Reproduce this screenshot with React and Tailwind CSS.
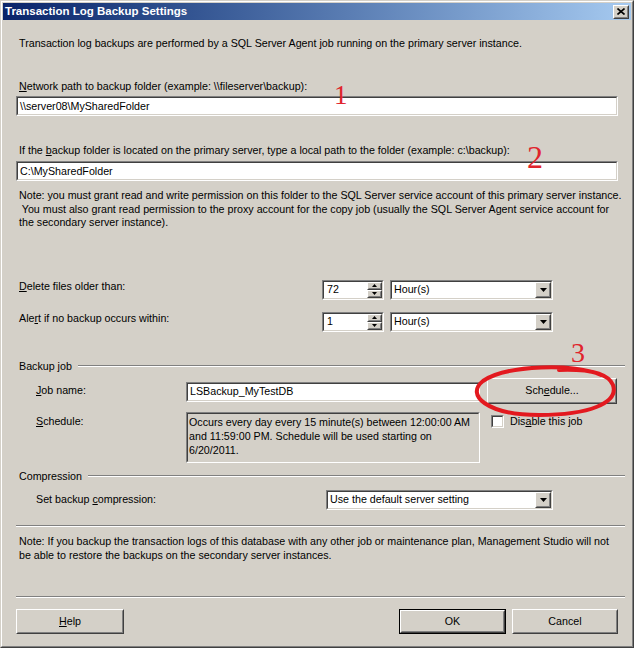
import React from "react"

const Sunken = ({ className = "", inner = "", children }) => (
  <div className={`border border-t-[#808080] border-l-[#808080] border-r-white border-b-white ${className}`}>
    <div className={`h-full border border-t-[#404040] border-l-[#404040] border-r-[#d4d0c8] border-b-[#d4d0c8] ${inner}`}>
      {children}
    </div>
  </div>
)

const Raised = ({ className = "", inner = "", children }) => (
  <div className={`bg-[#d4d0c8] border border-t-white border-l-white border-r-[#404040] border-b-[#404040] ${className}`}>
    <div className={`h-full flex items-center justify-center border border-t-[#d4d0c8] border-l-[#d4d0c8] border-r-[#808080] border-b-[#808080] ${inner}`}>
      {children}
    </div>
  </div>
)

const U = ({ children }) => <span className="underline underline-offset-[1px]">{children}</span>

const Dropdown = ({ value, className = "" }) => (
  <Sunken className={`h-[20px] ${className}`} inner="bg-white flex items-center">
    <span className="flex-1 pl-[2px]">{value}</span>
    <Raised className="w-[16px] h-[16px] shrink-0">
      <svg width="7" height="4" viewBox="0 0 7 4"><path d="M0 0h7L3.5 4z" fill="#000" /></svg>
    </Raised>
  </Sunken>
)

const Spinner = ({ value }) => (
  <Sunken className="h-[20px] w-[62px] shrink-0" inner="bg-white flex">
    <span className="flex-1 pl-[3px] flex items-center">{value}</span>
    <div className="flex flex-col w-[15px] shrink-0">
      <Raised className="h-[8px]">
        <svg width="5" height="3" viewBox="0 0 5 3"><path d="M2.5 0L5 3H0z" fill="#000" /></svg>
      </Raised>
      <Raised className="h-[8px]">
        <svg width="5" height="3" viewBox="0 0 5 3"><path d="M0 0h5L2.5 3z" fill="#000" /></svg>
      </Raised>
    </div>
  </Sunken>
)

const Etched = ({ className = "" }) => (
  <div className={`h-[2px] border-t border-t-[#808080] border-b border-b-white ${className}`} />
)

const GroupHeader = ({ title, className = "" }) => (
  <div className={`flex items-center -mr-[7px] h-[13px] ${className}`}>
    <span className="pl-[3px]">{title}</span>
    <Etched className="flex-1 ml-[6px]" />
  </div>
)

export default function App() {
  return (
    <div className="relative w-[634px] h-[648px] bg-[#d4d0c8] text-black text-[10.7px] leading-[13px] font-['Liberation_Sans',Arial,sans-serif] border border-t-[#d4d0c8] border-l-[#d4d0c8] border-r-[#404040] border-b-[#404040]">
      <div className="h-full border border-t-white border-l-white border-r-[#808080] border-b-[#808080] p-[1px]">
        {/* title bar */}
        <div className="h-[17px] flex items-center bg-linear-to-r from-[#0a246a] to-[#a6caf0] pl-[2px] pr-[2px]">
          <span className="flex-1 text-white font-bold text-[11.5px]">Transaction Log Backup Settings</span>
          <Raised className="w-[16px] h-[14px]">
            <svg width="8" height="7" viewBox="0 0 8 7">
              <path d="M0.5 0.5L7.5 6.5M7.5 0.5L0.5 6.5" stroke="#000" strokeWidth="1.6" />
            </svg>
          </Raised>
        </div>

        <div className="pl-[13px] pr-[13px]">
          <p className="mt-[17px] pl-[3px]">
            Transaction log backups are performed by a SQL Server Agent job running on the primary server instance.
          </p>

          <p className="mt-[30px] pl-[3px]">
            <U>N</U>etwork path to backup folder (example: \\fileserver\backup):
          </p>
          <Sunken className="mt-[3px] h-[20px]" inner="bg-white flex items-center pl-[2px]">
            \\server08\MySharedFolder
          </Sunken>

          <p className="mt-[28px] pl-[3px]">
            If the <U>b</U>ackup folder is located on the primary server, type a local path to the folder (example: c:\backup):
          </p>
          <Sunken className="mt-[4px] h-[20px]" inner="bg-white flex items-center pl-[2px]">
            C:\MySharedFolder
          </Sunken>

          <div className="mt-[8px] pl-[3px] leading-[13.5px] whitespace-pre -mr-[13px]">
            <div>Note: you must grant read and write permission on this folder to the SQL Server service account of this primary server instance.</div>
            <div> You must also grant read permission to the proxy account for the copy job (usually the SQL Server Agent service account for</div>
            <div>the secondary server instance).</div>
          </div>

          <div className="mt-[50px] flex items-start">
            <span className="w-[306px] pl-[3px] shrink-0"><U>D</U>elete files older than:</span>
            <Spinner value="72" />
            <Dropdown value="Hour(s)" className="ml-[6px] w-[163px]" />
          </div>
          <div className="mt-[12px] flex items-start">
            <span className="w-[306px] pl-[3px] shrink-0">Ale<U>r</U>t if no backup occurs within:</span>
            <Spinner value="1" />
            <Dropdown value="Hour(s)" className="ml-[6px] w-[163px]" />
          </div>

          <GroupHeader title="Backup job" className="mt-[28px]" />
          <div className="mt-[5px] flex items-start h-[26px]">
            <span className="w-[170px] pl-[20px] shrink-0 mt-[6px]"><U>J</U>ob name:</span>
            <Sunken className="w-[294px] h-[20px] mt-[4px] shrink-0" inner="bg-white flex items-center pl-[2px]">
              LSBackup_MyTestDB
            </Sunken>
            <Raised className="ml-[7px] w-[130px] h-[26px]">
              <span>Sch<U>e</U>dule...</span>
            </Raised>
          </div>
          <div className="mt-[8px] flex items-start">
            <span className="w-[170px] pl-[20px] shrink-0 mt-[3px]"><U>S</U>chedule:</span>
            <Sunken className="w-[294px] h-[51px] shrink-0" inner="pl-[1px] pt-[1px] leading-[14px]">
              Occurs every day every 15 minute(s) between 12:00:00 AM and 11:59:00 PM. Schedule will be used starting on 6/20/2011.
            </Sunken>
            <div className="ml-[11px] mt-[3px] flex items-center">
              <Sunken className="w-[13px] h-[13px]" inner="bg-white" />
              <span className="ml-[6px]">Dis<U>a</U>ble this job</span>
            </div>
          </div>

          <GroupHeader title="Compression" className="mt-[7px]" />
          <div className="mt-[7px] flex items-center">
            <span className="w-[310px] pl-[20px] shrink-0">Set backup <U>c</U>ompression:</span>
            <Dropdown value="Use the default server setting" className="w-[227px]" />
          </div>

          <Etched className="mt-[15px] -mr-[7px]" />
          <div className="mt-[7px] pl-[3px] leading-[14px] whitespace-pre -mr-[13px]">
            <div>Note: If you backup the transaction logs of this database with any other job or maintenance plan, Management Studio will not</div>
            <div>be able to restore the backups on the secondary server instances.</div>
          </div>

          <Etched className="mt-[34px] -mr-[7px]" />
          <div className="mt-[11px] flex items-center justify-between">
            <Raised className="w-[108px] h-[25px]">
              <span><U>H</U>elp</span>
            </Raised>
            <div className="flex gap-[6px]">
              <div className="border border-black">
                <Raised className="w-[105px] h-[23px]">
                  <span>OK</span>
                </Raised>
              </div>
              <Raised className="w-[106px] h-[25px]">
                <span>Cancel</span>
              </Raised>
            </div>
          </div>
        </div>
      </div>

      {/* hand-drawn annotations */}
      <span className="absolute left-[333px] top-[81px] text-[27px] leading-none text-[#e0242c] font-['Liberation_Serif',serif]">1</span>
      <span className="absolute left-[526px] top-[140px] text-[32px] leading-none text-[#e0242c] font-['Liberation_Serif',serif]">2</span>
      <span className="absolute left-[570px] top-[338px] text-[28px] leading-none text-[#e0242c] font-['Liberation_Serif',serif]">3</span>
      <svg className="absolute left-0 top-0 pointer-events-none" width="634" height="648" viewBox="0 0 634 648">
        <path
          d="M600 374 C575 362 505 364 482 380 C464 394 486 414 538 414 C588 414 618 402 612 384 C607 372 586 368 558 369"
          fill="none"
          stroke="#e3191f"
          strokeWidth="4"
          strokeLinecap="round"
        />
      </svg>
    </div>
  )
}
